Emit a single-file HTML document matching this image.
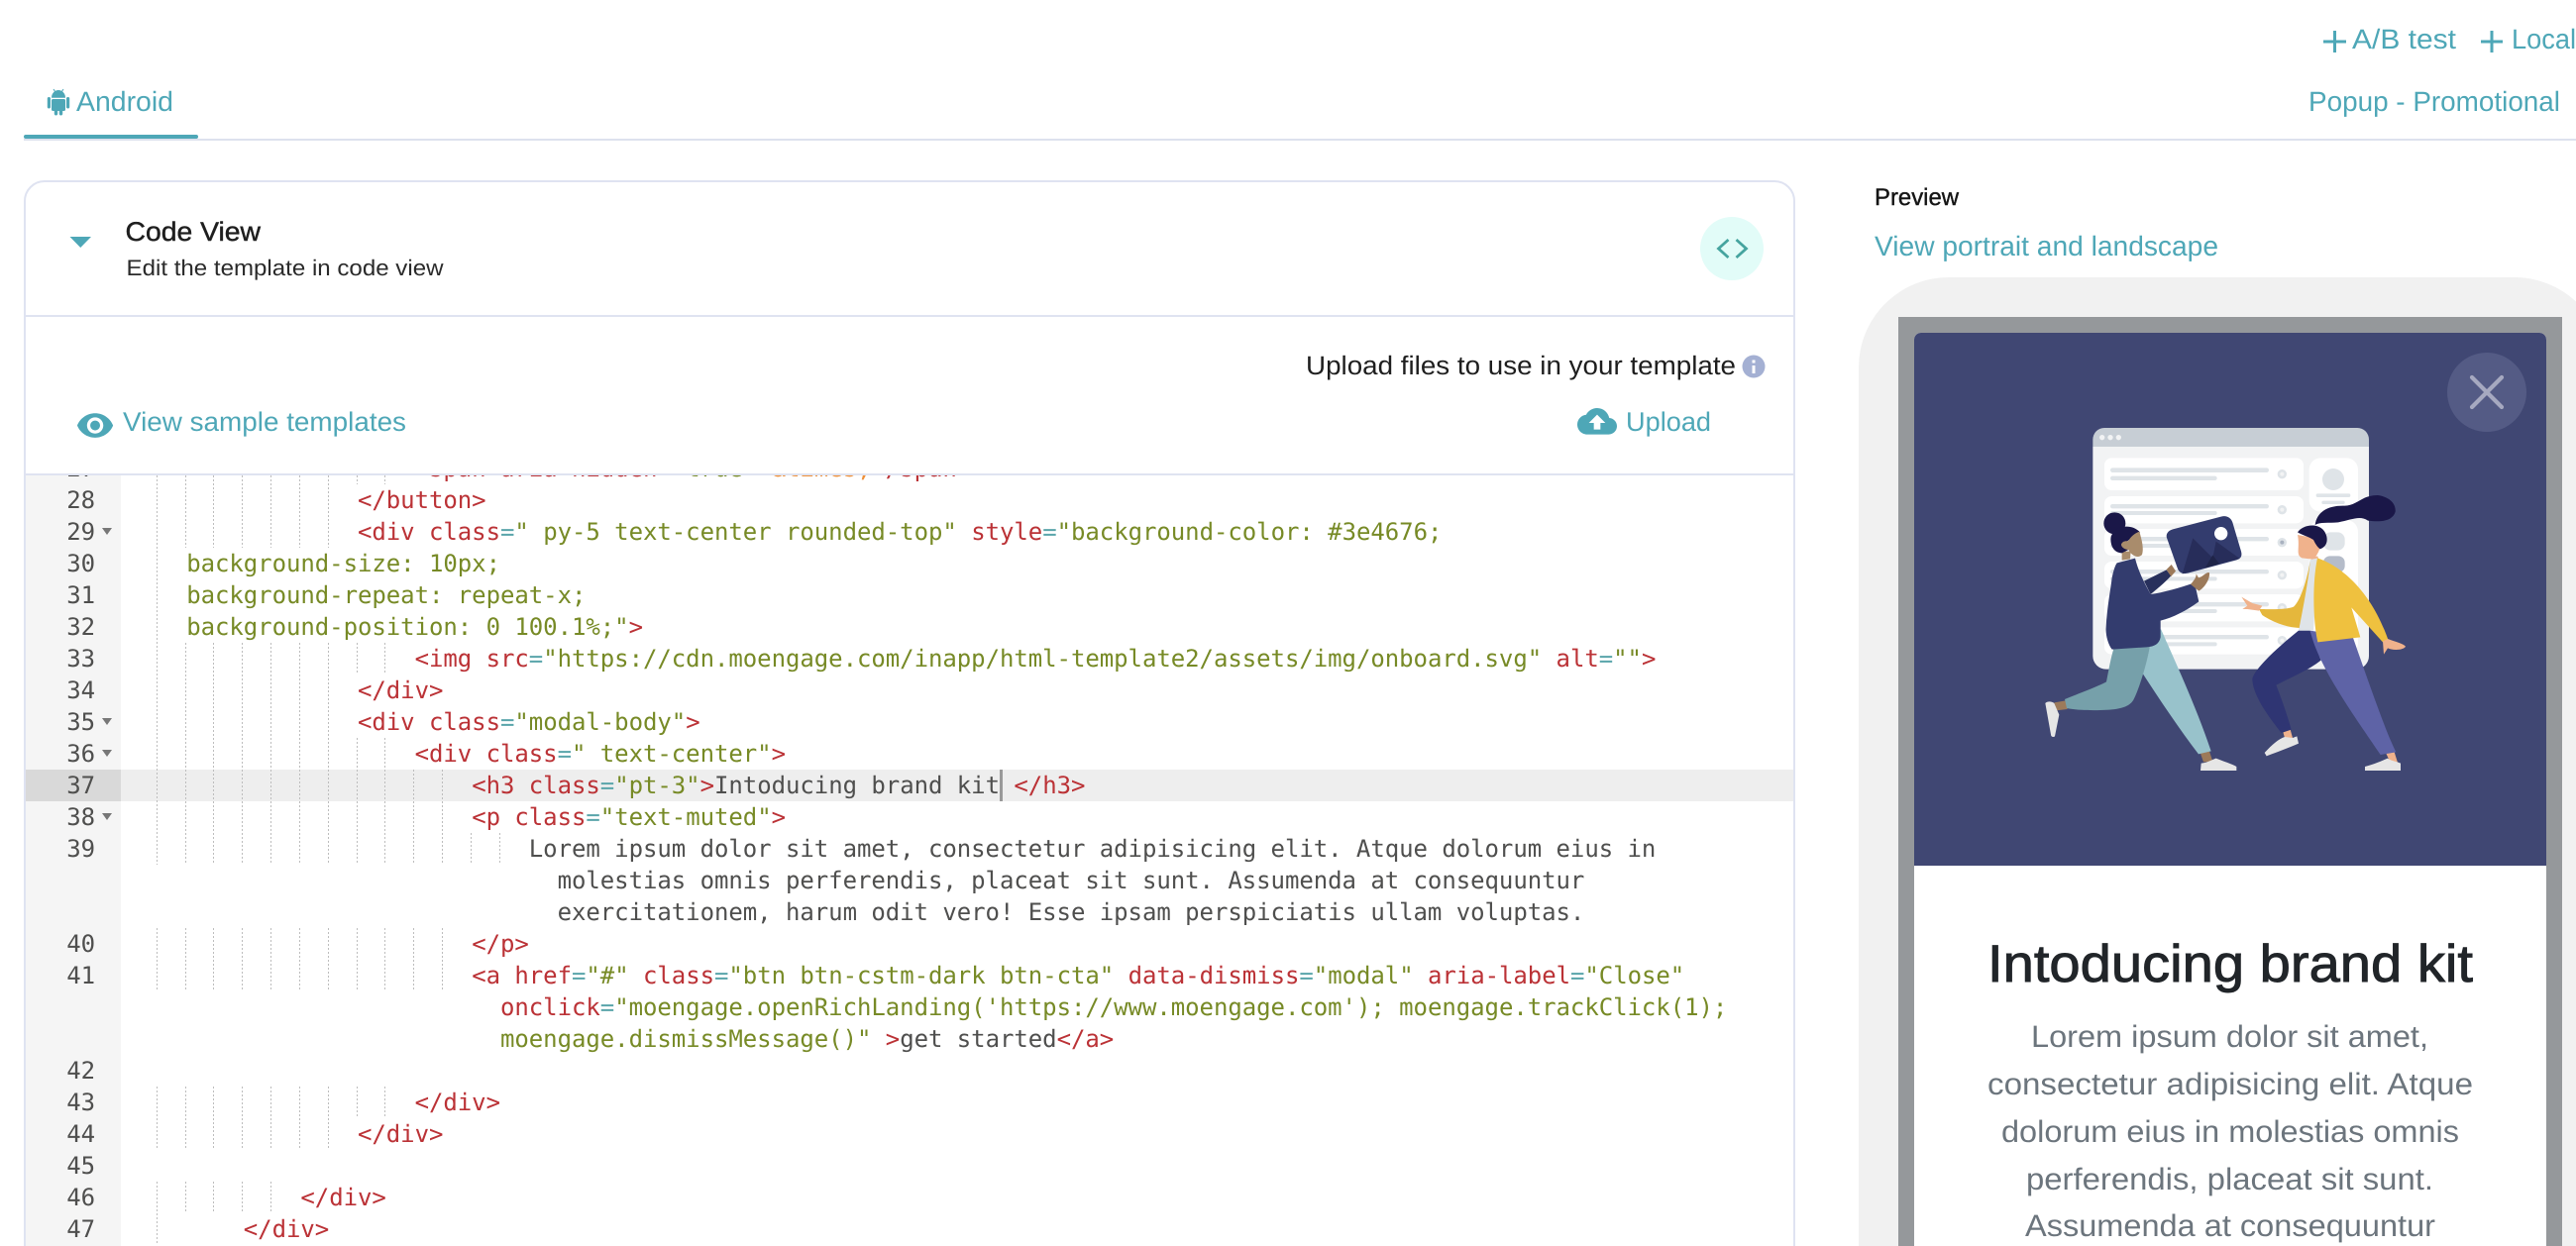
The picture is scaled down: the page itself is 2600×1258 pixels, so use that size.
<!DOCTYPE html>
<html lang="en">
<head>
<meta charset="utf-8">
<title>Code View</title>
<style>
html,body{margin:0;padding:0;background:#fff;overflow:hidden}
html{width:2600px;height:1258px}
body{width:2600px;height:1258px;overflow:hidden;position:relative;font-family:"Liberation Sans",sans-serif}
svg.base{position:absolute;left:0;top:0}
svg text{font-family:"Liberation Sans",sans-serif;text-rendering:geometricPrecision}
#code{position:absolute;left:26px;top:480px;width:1784px;height:778px;overflow:hidden}
#code .in{position:absolute;left:-26px;top:-480px;width:2600px;height:1258px;overflow:hidden}
.g{position:absolute;left:26px;width:96px;top:480px;height:778px;background:#f5f5f5}
.hl{position:absolute;left:122px;width:1688px;top:777px;height:32px;background:#eeeeee}
.hg{position:absolute;left:26px;width:96px;top:777px;height:32px;background:#d9d9d9}
.cur{position:absolute;left:1009px;top:777px;width:3px;height:32px;background:#999}
.r,.n{position:absolute;height:32px;line-height:32px;white-space:pre;font-family:"DejaVu Sans Mono","Liberation Mono",monospace;font-size:24px;letter-spacing:-.05px;color:#4f4f4e;text-rendering:geometricPrecision}
.r{margin-left:1.4px}
.n{left:26px;width:70px;text-align:right;letter-spacing:-.05px}
.f{position:absolute;left:103px;width:0;height:0;border-left:5.5px solid transparent;border-right:5.5px solid transparent;border-top:7px solid #777}
i{font-style:normal;color:#bb3236}
b{font-weight:normal;color:#5aa5aa}
u{text-decoration:none;color:#778a26}
s{text-decoration:none;color:#ee8f38}
</style>
</head>
<body>
<svg class="base" width="2600" height="1258" viewBox="0 0 2600 1258" xmlns="http://www.w3.org/2000/svg">
  <!-- top actions -->
  <path d="M2356.5 31v22M2345 42h23M2515 31v22M2504 42h22" stroke="#4ea7b7" stroke-width="3" fill="none"/>
  <text x="2374" y="49" font-size="28" fill="#4ea7b7" textLength="105" lengthAdjust="spacingAndGlyphs">A/B test</text>
  <text x="2535" y="49" font-size="28" fill="#4ea7b7" textLength="65" lengthAdjust="spacingAndGlyphs">Local</text>

  <!-- tabs -->
  <rect x="24" y="140" width="2576" height="2" fill="#dde1ee"/>
  <rect x="24" y="136" width="176" height="4" rx="2" fill="#4ea7b7"/>
  <g fill="#4ea7b7">
    <path d="M52 98.800a7 7.800 0 0 1 14 0z"/>
    <rect x="52" y="100" width="14" height="12" rx="1.500"/>
    <rect x="47.800" y="98" width="3.200" height="11.500" rx="1.600"/>
    <rect x="67" y="98" width="3.200" height="11.500" rx="1.600"/>
    <rect x="54.800" y="108" width="3.400" height="8.500" rx="1.700"/>
    <rect x="59.800" y="108" width="3.400" height="8.500" rx="1.700"/>
    <path d="M54 90l1.800 2.800M64 90l-1.800 2.800" stroke="#4ea7b7" stroke-width="1"/>
  </g>
  <text x="77" y="112" font-size="28" fill="#4ea7b7" textLength="98" lengthAdjust="spacingAndGlyphs">Android</text>
  <text x="2330" y="112" font-size="28" fill="#4ea7b7" textLength="254" lengthAdjust="spacingAndGlyphs">Popup - Promotional</text>

  <!-- card -->
  <path d="M25 1258V203a20 20 0 0 1 20-20H1791a20 20 0 0 1 20 20V1258" fill="#fff" stroke="#dfe3f1" stroke-width="2"/>
  <rect x="25" y="318" width="1786" height="2" fill="#dfe3f1"/>
  <path d="M70.500 239h21.500l-10.750 11z" fill="#4ea7b7"/>
  <text x="126.500" y="243" font-size="27" fill="#1e1e1e" stroke="#1e1e1e" stroke-width=".45" textLength="136.500" lengthAdjust="spacingAndGlyphs">Code View</text>
  <text x="127.500" y="278" font-size="22.500" fill="#2a2a2a" textLength="320" lengthAdjust="spacingAndGlyphs">Edit the template in code view</text>
  <circle cx="1748" cy="251" r="32" fill="#e2fcf8"/>
  <path d="M1744.500 242l-10 9 10 9M1752.500 242l10 9-10 9" fill="none" stroke="#45a49f" stroke-width="2.800"/>

  <text x="1318" y="378" font-size="26.500" fill="#1e1e1e" textLength="434" lengthAdjust="spacingAndGlyphs">Upload files to use in your template</text>
  <circle cx="1770" cy="370" r="11.500" fill="#a4b0d3"/>
  <rect x="1768.500" y="369" width="3" height="8" fill="#fff"/>
  <rect x="1768.500" y="363.500" width="3" height="3" fill="#fff"/>

  <path transform="translate(76.300 409.800) scale(1.645)" fill="#4ea7b7" d="M12 4.500C7 4.500 2.730 7.610 1 12c1.730 4.390 6 7.500 11 7.500s9.270-3.110 11-7.500c-1.730-4.390-6-7.500-11-7.500zM12 17c-2.760 0-5-2.240-5-5s2.240-5 5-5 5 2.240 5 5-2.240 5-5 5zm0-8c-1.660 0-3 1.340-3 3s1.340 3 3 3 3-1.340 3-3-1.340-3-3-3z"/>
  <text x="124" y="435" font-size="27" fill="#4ea7b7" textLength="286" lengthAdjust="spacingAndGlyphs">View sample templates</text>
  <path transform="translate(1592 405.300) scale(1.667)" fill="#4ea7b7" d="M19.350 10.040C18.670 6.590 15.640 4 12 4 9.110 4 6.600 5.640 5.350 8.040 2.340 8.360 0 10.910 0 14c0 3.310 2.690 6 6 6h13c2.760 0 5-2.240 5-5 0-2.640-2.050-4.780-4.650-4.960zM14 13v4h-4v-4H7l5-5 5 5h-3z"/>
  <text x="1641" y="435" font-size="27" fill="#4ea7b7" textLength="86" lengthAdjust="spacingAndGlyphs">Upload</text>

  <!-- preview -->
  <text x="1892" y="207" font-size="24" fill="#151515" stroke="#151515" stroke-width=".4" textLength="85" lengthAdjust="spacingAndGlyphs">Preview</text>
  <text x="1892" y="258" font-size="28" fill="#4ea7b7" textLength="347" lengthAdjust="spacingAndGlyphs">View portrait and landscape</text>

  <path d="M1876 1258V371a91 91 0 0 1 91-91H2538A91 91 0 0 1 2600 304.400V1258z" fill="#f1f1f1"/>
  <rect x="1916" y="320" width="670" height="938" fill="#95989b"/>
  <path d="M1932 1258V343a7 7 0 0 1 7-7h624a7 7 0 0 1 7 7V1258z" fill="#fff"/>
  <path d="M1932 874V343a7 7 0 0 1 7-7h624a7 7 0 0 1 7 7v531z" fill="#404773"/>
  <circle cx="2510" cy="396" r="40" fill="#545b85"/>
  <path d="M2495 381l30 30M2525 381l-30 30" stroke="#a6a9c0" stroke-width="4.200" stroke-linecap="round"/>

  <!-- illustration; coordinates in 3x space -->
  <g transform="translate(2020 420) scale(.33333)">
    <path d="M277 93V71a35 35 0 0 1 35-35h766a35 35 0 0 1 35 35v22z" fill="#c7ced5"/>
    <path d="M277 93h836v634a40 40 0 0 1-40 40H317a40 40 0 0 1-40-40z" fill="#f2f3f4"/>
    <g fill="#f2f3f4"><circle cx="305" cy="65" r="8"/><circle cx="330" cy="65" r="8"/><circle cx="355" cy="65" r="8"/></g>
    <g fill="#fff">
      <rect x="312" y="127" width="603" height="98" rx="22"/>
      <rect x="312" y="243" width="603" height="82" rx="22"/>
      <rect x="312" y="342" width="603" height="81" rx="22"/>
      <rect x="312" y="441" width="603" height="82" rx="22"/>
      <rect x="312" y="540" width="603" height="82" rx="22"/>
      <rect x="312" y="640" width="603" height="82" rx="22"/>
      <rect x="932" y="127" width="148" height="163" rx="35"/>
      <rect x="932" y="315" width="148" height="407" rx="35"/>
    </g>
    <g fill="#dfe4e8">
      <rect x="330" y="157" width="480" height="14" rx="7"/><rect x="330" y="182" width="323" height="13" rx="6.500"/>
      <rect x="330" y="267" width="480" height="13" rx="6.500"/><rect x="330" y="288" width="323" height="12" rx="6"/>
      <rect x="330" y="366" width="480" height="13" rx="6.500"/><rect x="330" y="387" width="323" height="12" rx="6"/>
      <rect x="330" y="465" width="480" height="13" rx="6.500"/><rect x="330" y="487" width="323" height="12" rx="6"/>
      <rect x="330" y="564" width="480" height="13" rx="6.500"/><rect x="330" y="585" width="323" height="12" rx="6"/>
      <rect x="330" y="663" width="480" height="13" rx="6.500"/><rect x="330" y="685" width="323" height="12" rx="6"/>
      <circle cx="850" cy="176" r="14"/><circle cx="850" cy="284" r="14"/><circle cx="850" cy="383" r="14"/><circle cx="850" cy="482" r="14"/><circle cx="850" cy="581" r="14"/><circle cx="850" cy="680" r="14"/>
      <circle cx="1005" cy="192" r="33"/>
      <rect x="953" y="235" width="104" height="11" rx="5"/><rect x="970" y="257" width="70" height="10" rx="5"/>
      <rect x="975" y="352" width="65" height="55" rx="22"/>
    </g>
    <rect x="975" y="424" width="65" height="50" rx="20" fill="#b5bcc9"/>
    <g fill="#f2f3f4"><circle cx="850" cy="176" r="6"/><circle cx="850" cy="284" r="6"/><circle cx="850" cy="482" r="6"/><circle cx="850" cy="581" r="6"/><circle cx="850" cy="680" r="6"/></g>
    <circle cx="850" cy="383" r="6" fill="#a9b2c0"/>

    <!-- left woman -->
    <path d="M160 868L195 862 200 888 165 892z" fill="#9c7a5a"/>
    <path d="M133 870C140 862 155 865 160 870L175 905 162 970C155 975 150 970 150 965z" fill="#e6e6e6"/>
    <path d="M603 1022L630 1016 640 1046 612 1048z" fill="#9c7a5a"/>
    <path d="M603 1074L605 1052C625 1050 640 1040 650 1037 670 1045 700 1055 712 1062V1074z" fill="#e6e6e6"/>
    <path d="M450 698L483 645C520 730 590 880 635 1015L597 1024C540 950 480 860 428 780 438 750 445 720 450 698z" fill="#98c2cb"/>
    <path d="M340 705L450 698C440 750 420 820 400 860 385 885 350 890 300 891 260 892 220 890 198 885L192 858C235 840 290 820 318 805 325 770 332 730 340 705z" fill="#76a0aa"/>
    <path d="M500 465L515 450 528 470 513 487z" fill="#9c7a5a"/>
    <path d="M432 500L500 466 513 485C490 510 470 525 452 540z" fill="#28305c"/>
    <path d="M365 410V437L390 433 392 410z" fill="#a98c6c"/>
    <path d="M350 445L405 431C415 470 430 500 452 540 490 535 540 520 585 505L598 562C560 590 520 610 482 620V670C478 690 465 698 440 700L335 707C322 690 315 660 317 640 320 580 330 530 335 490 340 465 345 452 350 445z" fill="#333c6e"/>
    <path d="M573 510C585 495 590 490 590 478L597 490C610 488 622 470 630 475 632 495 615 520 598 530z" fill="#9c7a5a"/>
    <circle cx="343" cy="325" r="33" fill="#1a1748"/>
    <path d="M420 352C395 325 345 330 332 365 328 390 340 415 365 415L385 405 380 380z" fill="#1a1748"/>
    <path d="M418 350C425 375 432 400 426 420 415 432 395 425 385 405 370 405 358 392 365 385 372 376 382 380 385 378 392 365 405 355 418 350z" fill="#a98c6c"/>

    <!-- picture card -->
    <path d="M519 343L665 305C682 300 695 308 700 322L726 410C730 425 725 432 712 436L565 476C548 480 538 474 533 460L502 372C496 358 505 347 519 343z" fill="#333c6e"/>
    <path d="M548 478L580 370 640 430 650 380 722 432 620 458z" fill="#272d5a"/>
    <path d="M617 460L640 421 660 448z" fill="#1f2448"/>
    <circle cx="665" cy="356" r="20" fill="#fff"/>

    <!-- right woman -->
    <path d="M853 957L875 950 882 975 858 975z" fill="#f0b28c"/>
    <path d="M1165 1022L1190 1018 1200 1050 1178 1050z" fill="#f0b28c"/>
    <path d="M797 1020C820 995 840 978 858 972L882 975 895 970 900 992C870 1005 830 1020 803 1030z" fill="#e6e6e6"/>
    <path d="M1101 1074V1062C1130 1055 1150 1045 1170 1037 1180 1045 1195 1045 1209 1052V1074z" fill="#e6e6e6"/>
    <path d="M900 650L935 650C945 680 960 720 968 740 930 770 880 790 832 815 850 860 870 920 878 950L848 960C800 900 760 840 760 795 770 760 850 690 900 650z" fill="#2f3573"/>
    <path d="M935 650L1065 672C1110 800 1165 960 1195 1018L1148 1026C1070 910 960 760 935 650z" fill="#5e63a6"/>
    <path d="M950 330C955 290 990 270 1040 272 1080 270 1090 240 1140 240 1175 245 1195 265 1193 290 1185 318 1150 322 1110 317 1085 300 1060 315 1020 322 990 325 965 320 950 330z" fill="#1a1748"/>
    <path d="M940 425L958 425 962 440 935 445z" fill="#f0b28c"/>
    <path d="M897 360C905 400 890 420 910 430L935 433C955 432 960 410 965 400L950 370z" fill="#f0b28c"/>
    <path d="M897 352C915 325 975 320 985 365 990 390 975 400 965 403 955 395 950 385 945 375 930 365 910 360 897 352z" fill="#1a1748"/>
    <path d="M935 435L960 430 945 650H900z" fill="#dfe4e8"/>
    <path d="M935 440C925 500 905 560 885 578 860 588 810 585 780 585L790 603C830 630 870 640 902 642 910 600 930 500 935 440z" fill="#e5b73c"/>
    <path d="M780 590L745 585 730 585 745 575 727 548 760 567 790 575z" fill="#f0b28c"/>
    <path d="M957 430C1030 455 1120 530 1172 680L1155 685 1060 580 1087 670 958 685C945 630 940 510 957 430z" fill="#efc13f"/>
    <path d="M1155 682L1170 675C1195 685 1215 688 1224 698 1220 708 1190 712 1170 703L1158 722z" fill="#f0b28c"/>
  </g>

  <!-- preview text -->
  <text x="2006" y="991" font-size="53" fill="#212529" stroke="#212529" stroke-width=".9" textLength="490" lengthAdjust="spacingAndGlyphs">Intoducing brand kit</text>
  <g font-size="31" fill="#6c757d">
    <text x="2050" y="1057" textLength="401" lengthAdjust="spacingAndGlyphs">Lorem ipsum dolor sit amet,</text>
    <text x="2006" y="1105" textLength="490" lengthAdjust="spacingAndGlyphs">consectetur adipisicing elit. Atque</text>
    <text x="2020" y="1153" textLength="462" lengthAdjust="spacingAndGlyphs">dolorum eius in molestias omnis</text>
    <text x="2045" y="1201" textLength="411" lengthAdjust="spacingAndGlyphs">perferendis, placeat sit sunt.</text>
    <text x="2044" y="1248" textLength="414" lengthAdjust="spacingAndGlyphs">Assumenda at consequuntur</text>
  </g>
</svg>

<div id="code"><div class="in">
  <div class="g"></div>
  <div class="hl"></div>
  <div class="hg"></div>

  <svg style="position:absolute;left:0;top:0" width="2600" height="1258" xmlns="http://www.w3.org/2000/svg">
    <defs>
      <path id="c0" d="M.5 480V873M.5 937V1001M.5 1097V1161M.5 1193V1257"/>
      <path id="c6" d="M.5 480V553M.5 649V873M.5 937V1001M.5 1097V1161M.5 1193V1225"/>
      <path id="c10" d="M.5 480V553M.5 649V873M.5 937V1001M.5 1097V1161"/>
      <path id="c14" d="M.5 480V489M.5 649V681M.5 745V873M.5 937V1001M.5 1097V1129"/>
      <path id="c18" d="M.5 777V873M.5 937V1001"/>
      <path id="c22" d="M.5 841V873"/>
    </defs>
    <g fill="none" stroke="#bdbdbd" stroke-width="1" stroke-dasharray="2 2">
      <use href="#c0" x="158"/>
      <use href="#c6" x="187"/>
      <use href="#c6" x="215"/>
      <use href="#c6" x="244"/>
      <use href="#c6" x="273"/>
      <use href="#c10" x="302"/>
      <use href="#c10" x="331"/>
      <use href="#c14" x="360"/>
      <use href="#c14" x="388"/>
      <use href="#c18" x="417"/>
      <use href="#c18" x="446"/>
      <use href="#c22" x="475"/>
      <use href="#c22" x="504"/>
    </g>
  </svg>

  <div class="n" style="top:457px">27</div>
  <div class="n" style="top:489px">28</div>
  <div class="n" style="top:521px">29</div><div class="f" style="top:533px"></div>
  <div class="n" style="top:553px">30</div>
  <div class="n" style="top:585px">31</div>
  <div class="n" style="top:617px">32</div>
  <div class="n" style="top:649px">33</div>
  <div class="n" style="top:681px">34</div>
  <div class="n" style="top:713px">35</div><div class="f" style="top:725px"></div>
  <div class="n" style="top:745px">36</div><div class="f" style="top:757px"></div>
  <div class="n" style="top:777px">37</div>
  <div class="n" style="top:809px">38</div><div class="f" style="top:821px"></div>
  <div class="n" style="top:841px">39</div>
  <div class="n" style="top:937px">40</div>
  <div class="n" style="top:969px">41</div>
  <div class="n" style="top:1065px">42</div>
  <div class="n" style="top:1097px">43</div>
  <div class="n" style="top:1129px">44</div>
  <div class="n" style="top:1161px">45</div>
  <div class="n" style="top:1193px">46</div>
  <div class="n" style="top:1225px">47</div>

  <div class="r" style="top:457px;left:417.2px"><i>&lt;span aria-hidden</i><b>=</b><u>"true"</u><i>&gt;</i><s>&amp;times;</s><i>&lt;/span&gt;</i></div>
  <div class="r" style="top:489px;left:359.6px"><i>&lt;/button&gt;</i></div>
  <div class="r" style="top:521px;left:359.6px"><i>&lt;div class</i><b>=</b><u>" py-5 text-center rounded-top"</u> <i>style</i><b>=</b><u>"background-color: #3e4676;</u></div>
  <div class="r" style="top:553px;left:186.8px"><u>background-size: 10px;</u></div>
  <div class="r" style="top:585px;left:186.8px"><u>background-repeat: repeat-x;</u></div>
  <div class="r" style="top:617px;left:186.8px"><u>background-position: 0 100.1%;"</u><i>&gt;</i></div>
  <div class="r" style="top:649px;left:417.2px"><i>&lt;img src</i><b>=</b><u>"https://cdn.moengage.com/inapp/html-template2/assets/img/onboard.svg"</u> <i>alt</i><b>=</b><u>""</u><i>&gt;</i></div>
  <div class="r" style="top:681px;left:359.6px"><i>&lt;/div&gt;</i></div>
  <div class="r" style="top:713px;left:359.6px"><i>&lt;div class</i><b>=</b><u>"modal-body"</u><i>&gt;</i></div>
  <div class="r" style="top:745px;left:417.2px"><i>&lt;div class</i><b>=</b><u>" text-center"</u><i>&gt;</i></div>
  <div class="r" style="top:777px;left:474.8px"><i>&lt;h3 class</i><b>=</b><u>"pt-3"</u><i>&gt;</i>Intoducing brand kit <i>&lt;/h3&gt;</i></div>
  <div class="cur"></div>
  <div class="r" style="top:809px;left:474.8px"><i>&lt;p class</i><b>=</b><u>"text-muted"</u><i>&gt;</i></div>
  <div class="r" style="top:841px;left:532.4px">Lorem ipsum dolor sit amet, consectetur adipisicing elit. Atque dolorum eius in</div>
  <div class="r" style="top:873px;left:561.2px">molestias omnis perferendis, placeat sit sunt. Assumenda at consequuntur</div>
  <div class="r" style="top:905px;left:561.2px">exercitationem, harum odit vero! Esse ipsam perspiciatis ullam voluptas.</div>
  <div class="r" style="top:937px;left:474.8px"><i>&lt;/p&gt;</i></div>
  <div class="r" style="top:969px;left:474.8px"><i>&lt;a href</i><b>=</b><u>"#"</u> <i>class</i><b>=</b><u>"btn btn-cstm-dark btn-cta"</u> <i>data-dismiss</i><b>=</b><u>"modal"</u> <i>aria-label</i><b>=</b><u>"Close"</u></div>
  <div class="r" style="top:1001px;left:503.6px"><i>onclick</i><b>=</b><u>"moengage.openRichLanding('https://www.moengage.com'); moengage.trackClick(1);</u></div>
  <div class="r" style="top:1033px;left:503.6px"><u>moengage.dismissMessage()"</u> <i>&gt;</i>get started<i>&lt;/a&gt;</i></div>
  <div class="r" style="top:1097px;left:417.2px"><i>&lt;/div&gt;</i></div>
  <div class="r" style="top:1129px;left:359.6px"><i>&lt;/div&gt;</i></div>
  <div class="r" style="top:1193px;left:302px"><i>&lt;/div&gt;</i></div>
  <div class="r" style="top:1225px;left:244.4px"><i>&lt;/div&gt;</i></div>
</div></div>

<div style="position:absolute;left:25px;top:478px;width:1786px;height:2px;background:#dfe3f1"></div>
</body>
</html>
